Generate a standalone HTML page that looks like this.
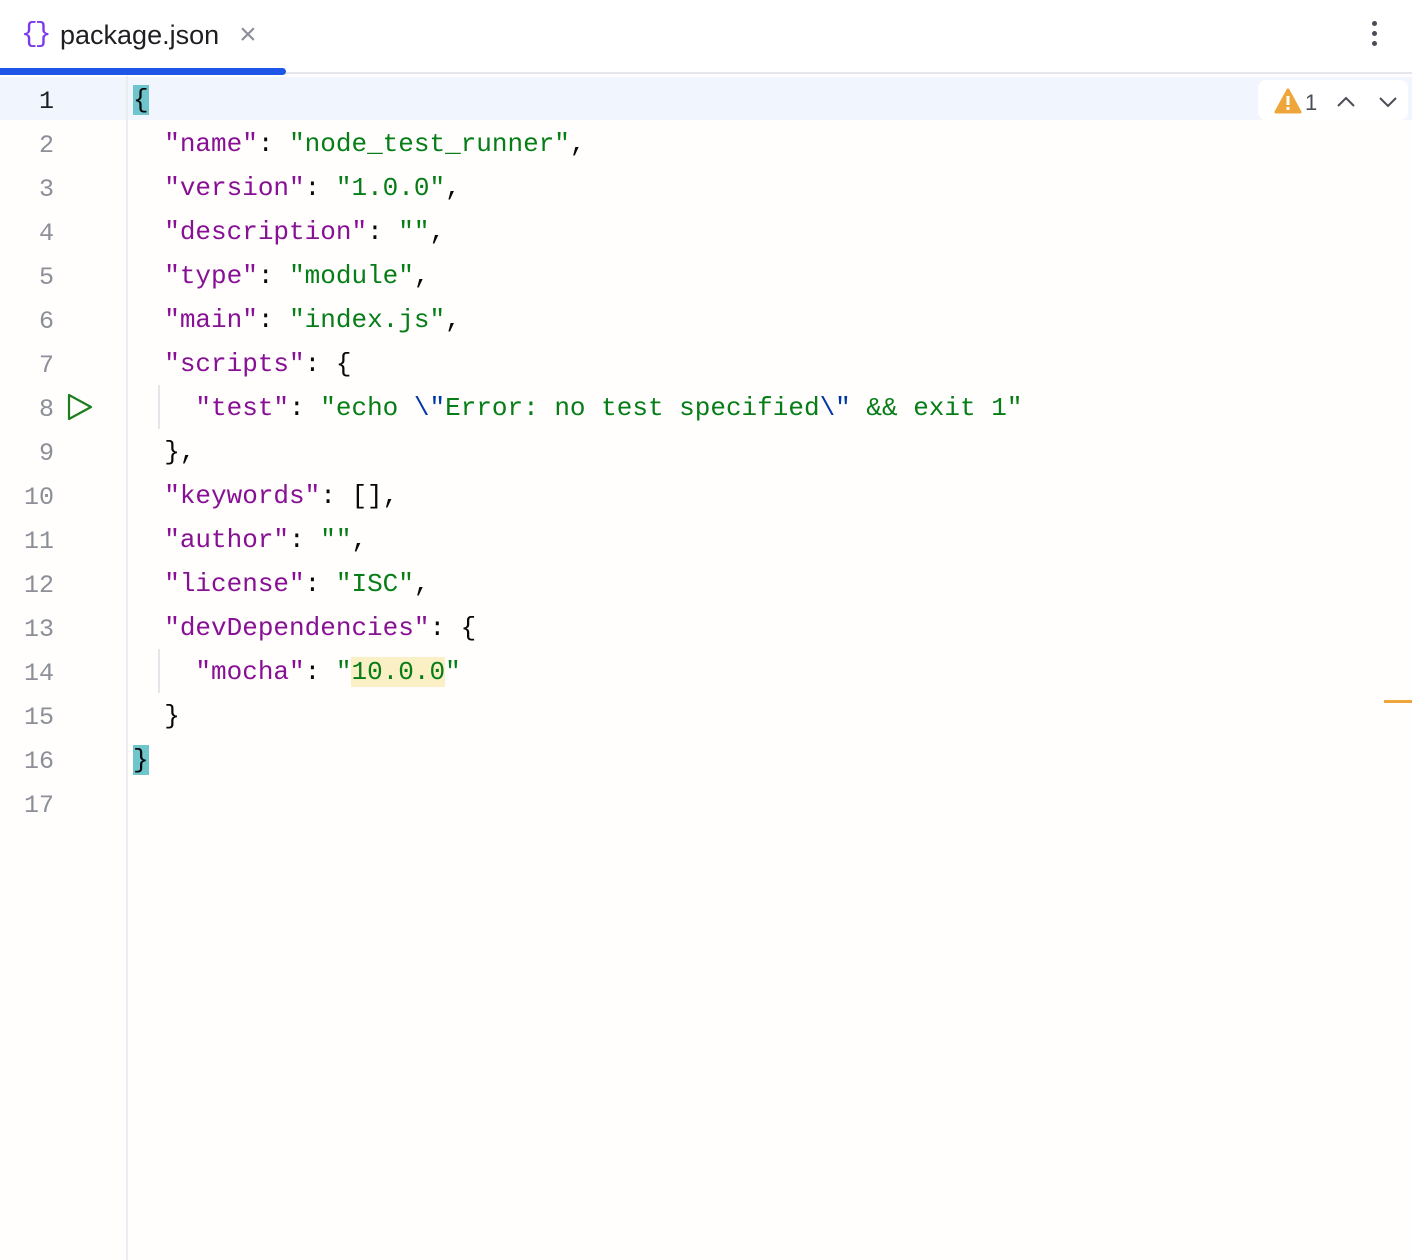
<!DOCTYPE html>
<html><head><meta charset="utf-8"><style>
*{margin:0;padding:0;box-sizing:border-box}
body{width:1412px;height:1260px;background:#fffefc;overflow:hidden;position:relative;font-family:"Liberation Mono",monospace}
.tabbar{position:absolute;left:0;top:0;width:1412px;height:74px;background:#fff;border-bottom:2px solid #e6e7ec}
.tab{position:absolute;left:60px;top:18px;font:27px "Liberation Sans",sans-serif;color:#1e1f22}
.ul{position:absolute;left:0;top:68px;width:286px;height:7px;background:#1e57e8;border-radius:0 4px 4px 0}
.cur{position:absolute;left:0;top:77px;width:1412px;height:43px;background:#f1f5fd}
.gut{position:absolute;left:126px;top:76px;width:2px;height:1184px;background:#ebecf0}
.ln{position:absolute;left:0;width:54px;text-align:right;font-size:25px;color:#8c8f98}
.code{position:absolute;left:133px;font-size:26px;color:#080808;white-space:pre;line-height:44px}
.k{color:#871094}.s{color:#067d17}.e{color:#0037a6}
.br{background:#6ec6cc}
.hl{background:#fbefc5}
.guide{position:absolute;left:158px;width:2px;background:#e4e5e8}
</style></head><body>
<div class="tabbar"></div>
<div style="position:absolute;left:21px;top:19px;font:28px 'Liberation Mono',monospace;color:#7c3aed;letter-spacing:-3px">{}</div>
<div class="tab">package.json<span style="color:#8c8f98;margin-left:20px;font-size:30px">×</span></div>
<div style="position:absolute;left:1372px;top:21px;width:6px">
<div style="width:5px;height:5px;border-radius:3px;background:#4a4d55;margin-bottom:5px"></div>
<div style="width:5px;height:5px;border-radius:3px;background:#4a4d55;margin-bottom:5px"></div>
<div style="width:5px;height:5px;border-radius:3px;background:#4a4d55"></div></div>
<div class="ul"></div>
<div class="cur"></div>
<div class="gut"></div>
<div style="position:absolute;left:1258px;top:80px;width:150px;height:40px;background:#fff;border-radius:8px"></div>
<svg style="position:absolute;left:1274px;top:88px" width="130" height="28">
<path d="M14 2 L26 24 L2 24 Z" fill="#eea63a" stroke="#eea63a" stroke-width="3" stroke-linejoin="round"/>
<rect x="12.5" y="8" width="3" height="9" fill="#fff"/><rect x="12.5" y="19" width="3" height="3" fill="#fff"/>
<text x="31" y="22" font-family="Liberation Sans" font-size="22" fill="#4a4d55">1</text>
<path d="M64 18 L72 10 L80 18" fill="none" stroke="#4a4d55" stroke-width="2"/>
<path d="M106 10 L114 18 L122 10" fill="none" stroke="#4a4d55" stroke-width="2"/>
</svg>
<div style="position:absolute;left:1384px;top:700px;width:28px;height:3px;background:#eea63a"></div>
<svg style="position:absolute;left:66px;top:393px" width="28" height="28"><path d="M3 2 L25 14 L3 26 Z" fill="none" stroke="#1e7d1e" stroke-width="2.2" stroke-linejoin="round"/></svg>
<div class="guide" style="top:385px;height:44px"></div>
<div class="guide" style="top:649px;height:44px"></div>
<div class="code" style="top:78px"><span class="br">{</span>
  <span class="k">"name"</span>: <span class="s">"node_test_runner"</span>,
  <span class="k">"version"</span>: <span class="s">"1.0.0"</span>,
  <span class="k">"description"</span>: <span class="s">""</span>,
  <span class="k">"type"</span>: <span class="s">"module"</span>,
  <span class="k">"main"</span>: <span class="s">"index.js"</span>,
  <span class="k">"scripts"</span>: {
    <span class="k">"test"</span>: <span class="s">"echo <span class="e">\"</span>Error: no test specified<span class="e">\"</span> &amp;&amp; exit 1"</span>
  },
  <span class="k">"keywords"</span>: [],
  <span class="k">"author"</span>: <span class="s">""</span>,
  <span class="k">"license"</span>: <span class="s">"ISC"</span>,
  <span class="k">"devDependencies"</span>: {
    <span class="k">"mocha"</span>: <span class="s">"<span class="hl">10.0.0</span>"</span>
  }
<span class="br">}</span>
</div>
<div class="ln" style="top:87px;color:#1e1f22">1</div>
<div class="ln" style="top:131px">2</div>
<div class="ln" style="top:175px">3</div>
<div class="ln" style="top:219px">4</div>
<div class="ln" style="top:263px">5</div>
<div class="ln" style="top:307px">6</div>
<div class="ln" style="top:351px">7</div>
<div class="ln" style="top:395px">8</div>
<div class="ln" style="top:439px">9</div>
<div class="ln" style="top:483px">10</div>
<div class="ln" style="top:527px">11</div>
<div class="ln" style="top:571px">12</div>
<div class="ln" style="top:615px">13</div>
<div class="ln" style="top:659px">14</div>
<div class="ln" style="top:703px">15</div>
<div class="ln" style="top:747px">16</div>
<div class="ln" style="top:791px">17</div>
</body></html>
